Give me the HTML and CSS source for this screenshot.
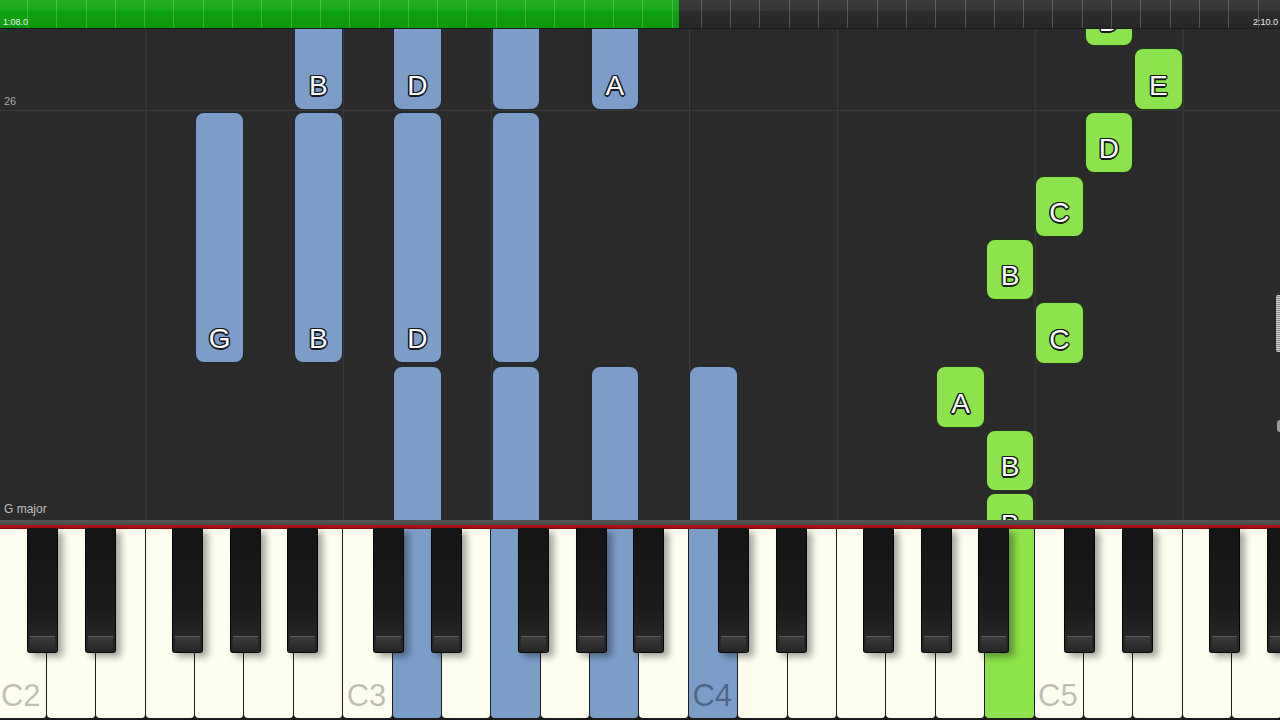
FILE: index.html
```html
<!DOCTYPE html>
<html lang="en">
<head>
<meta charset="utf-8">
<title>Piano roll</title>
<link rel="stylesheet" href="styles.css">
</head>
<body>
<div class="app">
  <header class="timeline">
    <div class="progress"></div>
    <span class="time time-start">1:08.0</span>
    <span class="time time-end">2:10.0</span>
  </header>

  <main class="roll">
    <span class="measure">26</span>
    <span class="key-sig">G major</span>

    <!-- blue (left hand) notes -->
    <div class="note blue" style="left:294.2px;top:-40px;height:121px"><span>B</span></div>
    <div class="note blue" style="left:393px;top:-40px;height:121px"><span>D</span></div>
    <div class="note blue" style="left:491.8px;top:-40px;height:121px"></div>
    <div class="note blue" style="left:590.6px;top:-40px;height:121px"><span>A</span></div>

    <div class="note blue" style="left:195.4px;top:83px;height:251px"><span>G</span></div>
    <div class="note blue" style="left:294.2px;top:83px;height:251px"><span>B</span></div>
    <div class="note blue" style="left:393px;top:83px;height:251px"><span>D</span></div>
    <div class="note blue" style="left:491.8px;top:83px;height:251px"></div>

    <div class="note blue" style="left:393px;top:337px;height:200px"></div>
    <div class="note blue" style="left:491.8px;top:337px;height:200px"></div>
    <div class="note blue" style="left:590.6px;top:337px;height:200px"></div>
    <div class="note blue" style="left:689.4px;top:337px;height:200px"></div>

    <!-- green (right hand) notes -->
    <div class="note green" style="left:1084.6px;top:-44px;height:61px"><span>D</span></div>
    <div class="note green" style="left:1134px;top:19px;height:62px"><span>E</span></div>
    <div class="note green" style="left:1084.6px;top:83px;height:61px"><span>D</span></div>
    <div class="note green" style="left:1035.2px;top:147px;height:61px"><span>C</span></div>
    <div class="note green" style="left:985.8px;top:210px;height:61px"><span>B</span></div>
    <div class="note green" style="left:1035.2px;top:273px;height:62px"><span>C</span></div>
    <div class="note green" style="left:936.4px;top:337px;height:62px"><span>A</span></div>
    <div class="note green" style="left:985.8px;top:401px;height:61px"><span>B</span></div>
    <div class="note green" style="left:985.8px;top:464px;height:56px"><span>B</span></div>

    <div class="edge-thumb"></div>
    <div class="edge-dot"></div>
  </main>

  <div class="kb-edge"></div>

  <div class="keyboard">
    <div class="w"><span class="lbl">C2</span><i class="b cs"></i></div>
    <div class="w"><i class="b ds"></i></div>
    <div class="w"></div>
    <div class="w"><i class="b fs"></i></div>
    <div class="w"><i class="b gs"></i></div>
    <div class="w"><i class="b as"></i></div>
    <div class="w"></div>

    <div class="w"><span class="lbl">C3</span><i class="b cs"></i></div>
    <div class="w blue"><i class="b ds"></i></div>
    <div class="w"></div>
    <div class="w blue"><i class="b fs"></i></div>
    <div class="w"><i class="b gs"></i></div>
    <div class="w blue"><i class="b as"></i></div>
    <div class="w"></div>

    <div class="w blue"><span class="lbl">C4</span><i class="b cs"></i></div>
    <div class="w"><i class="b ds"></i></div>
    <div class="w"></div>
    <div class="w"><i class="b fs"></i></div>
    <div class="w"><i class="b gs"></i></div>
    <div class="w"><i class="b as"></i></div>
    <div class="w green"></div>

    <div class="w"><span class="lbl">C5</span><i class="b cs"></i></div>
    <div class="w"><i class="b ds"></i></div>
    <div class="w"></div>
    <div class="w"><i class="b fs"></i></div>
    <div class="w"><i class="b gs"></i></div>
  </div>
</div>
</body>
</html>
```

FILE: styles.css
```css
* { box-sizing: border-box; }

html, body {
  margin: 0;
  padding: 0;
}

body {
  width: 1280px;
  height: 720px;
  overflow: hidden;
  background: #2a2a2a;
  font-family: "Liberation Sans", Arial, sans-serif;
}

.app {
  display: flex;
  flex-direction: column;
  width: 1280px;
  height: 720px;
}

/* ---------- timeline ---------- */
.timeline {
  position: relative;
  flex: none;
  height: 29px;
  background: linear-gradient(#3b3b3b 0, #343434 38%, #2c2c2c 40%, #272727 100%);
  border-bottom: 1px solid #1b1b1b;
}

.progress {
  width: 679px;
  height: 100%;
  background: linear-gradient(#22ae22 0, #17a817 38%, #10a110 40%, #0c980c 100%);
}

.timeline::after {
  content: "";
  position: absolute;
  left: 27px;
  top: 0;
  right: 0;
  bottom: 0;
  background: repeating-linear-gradient(90deg, rgba(255,255,255,0.2) 0 1px, transparent 1px 29.3px);
}

.time {
  position: absolute;
  bottom: 1px;
  z-index: 1;
  font-size: 9px;
  line-height: 9px;
  color: #ececec;
}

.time-start { left: 3px; }
.time-end { left: 1253px; }

/* ---------- roll ---------- */
.roll {
  position: relative;
  flex: none;
  height: 491px;
  overflow: hidden;
  background-color: #2a2a2a;
  background-image:
    linear-gradient(to bottom, transparent 81px, #3a3a3a 81px, #3a3a3a 82px, transparent 82px),
    linear-gradient(90deg, #3a3a3a 0 1px, transparent 1px 148.2px, #3a3a3a 148.2px 149.2px, transparent 149.2px);
  background-size: 100% 100%, 345.8px 100%;
  background-repeat: no-repeat, repeat-x;
  background-position: 0 0, -2.6px 0;
}

.measure {
  position: absolute;
  left: 4px;
  top: 67px;
  font-size: 11px;
  line-height: 11px;
  color: #a8a8a8;
}

.key-sig {
  position: absolute;
  left: 4px;
  top: 474px;
  font-size: 12px;
  line-height: 12px;
  color: #bdbdbd;
}

.note {
  position: absolute;
  width: 48.5px;
  border: 1px solid rgba(8, 12, 18, 0.8);
  border-radius: 9px;
  display: flex;
  flex-direction: column;
  justify-content: flex-end;
  align-items: center;
  padding-bottom: 9px;
}

.note.blue { background: #7b9dc8; }
.note.green { background: #8de34b; }

.note span {
  font-size: 28px;
  line-height: 28px;
  color: #ffffff;
  text-shadow:
    -1px -1px 0 #161a20, 1px -1px 0 #161a20,
    -1px 1px 0 #161a20, 1px 1px 0 #161a20,
    0 -1.5px 0 #161a20, 0 1.5px 0 #161a20,
    -1.5px 0 0 #161a20, 1.5px 0 0 #161a20;
}

.edge-thumb {
  position: absolute;
  right: 0;
  top: 266px;
  width: 4px;
  height: 57px;
  border-radius: 2px 0 0 2px;
  background: repeating-linear-gradient(#cfcfcf 0 1px, #8a8a8a 1px 2px);
}

.edge-dot {
  position: absolute;
  right: 0;
  top: 391px;
  width: 3px;
  height: 12px;
  border-radius: 6px 0 0 6px;
  background: #9a9a9a;
}

/* ---------- keyboard ---------- */
.kb-edge {
  flex: none;
  height: 9px;
  background: linear-gradient(#575757 0, #4a4a4a 5px, #a41212 5px, #b21616 6.5px, #7a0a0a 9px);
}

.keyboard {
  flex: 1;
  display: flex;
  align-items: flex-start;
  margin-left: -2.6px;
  background: #1a1a1a;
}

.w {
  position: relative;
  flex: none;
  width: 49.4px;
  height: 189px;
  background: #fdfdf0;
  border-right: 1.5px solid #1e1e1e;
  border-radius: 0 0 4px 4px;
  display: flex;
  flex-direction: column;
  justify-content: flex-end;
  padding: 0 0 7.3px 3.5px;
}

.w.blue { background: #7b9ec9; }
.w.green { background: #8de34b; }

.lbl {
  font-size: 31px;
  line-height: 31px;
  color: rgba(0, 0, 0, 0.25);
}

.w.blue .lbl { color: rgba(20, 30, 50, 0.45); }

.b {
  position: absolute;
  top: -1px;
  z-index: 2;
  width: 31px;
  height: 125px;
  background: linear-gradient(to bottom, #141414 0%, #1b1b1b 65%, #262626 88%);
  border: 1.5px solid #070707;
  border-top: none;
  border-radius: 0 0 3px 3px;
  box-shadow: 5px 4px 7px rgba(0, 0, 0, 0.35);
}

.b::after {
  content: "";
  position: absolute;
  left: 2px;
  right: 2px;
  bottom: 1px;
  height: 15px;
  border-radius: 0 0 2px 2px;
  background: linear-gradient(#5c5c5c 0, #5c5c5c 1px, #3a3a3a 1px, #262626 100%);
}

.cs { left: 29.6px; }
.ds { left: 38.2px; }
.fs { left: 26.4px; }
.gs { left: 35px; }
.as { left: 42.6px; }
```
